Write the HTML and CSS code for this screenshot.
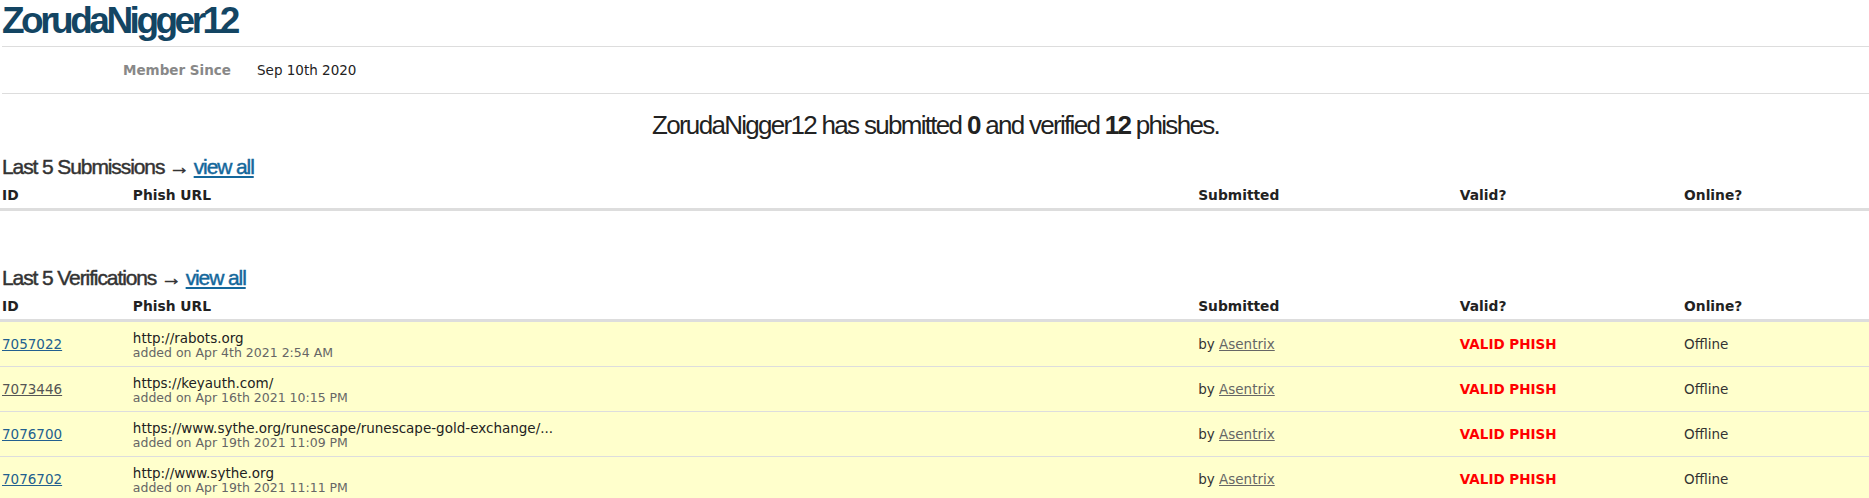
FILE: index.html
```html
<!DOCTYPE html>
<html>
<head>
<meta charset="utf-8">
<title>ZorudaNigger12</title>
<link rel="stylesheet" href="styles.css">
</head>
<body>
<div class="page">
  <h1 class="username">ZorudaNigger12</h1>
  <div class="profile">
    <span class="profile-label">Member Since</span>
    <span class="profile-value">Sep 10th 2020</span>
  </div>
  <p class="summary">ZorudaNigger12 has submitted <b>0</b> and verified <b>12</b> phishes.</p>

  <h2 class="section-title">Last 5 Submissions &rarr; <a href="#" class="view-all">view all</a></h2>
</div>
<table class="data">
  <colgroup><col class="c-id"><col class="c-url"><col class="c-sub"><col class="c-valid"><col class="c-online"></colgroup>
  <thead>
    <tr><th>ID</th><th>Phish URL</th><th>Submitted</th><th>Valid?</th><th>Online?</th></tr>
  </thead>
  <tbody></tbody>
</table>

<div class="page">
  <h2 class="section-title second">Last 5 Verifications &rarr; <a href="#" class="view-all">view all</a></h2>
</div>
<table class="data">
  <colgroup><col class="c-id"><col class="c-url"><col class="c-sub"><col class="c-valid"><col class="c-online"></colgroup>
  <thead>
    <tr><th>ID</th><th>Phish URL</th><th>Submitted</th><th>Valid?</th><th>Online?</th></tr>
  </thead>
  <tbody>
    <tr>
      <td><a href="#" class="id-link">7057022</a></td>
      <td class="url-cell"><div class="url">http://rabots.org</div><div class="added">added on Apr 4th 2021 2:54 AM</div></td>
      <td>by <a href="#" class="user-link">Asentrix</a></td>
      <td class="valid">VALID PHISH</td>
      <td>Offline</td>
    </tr>
    <tr>
      <td><a href="#" class="id-link visited">7073446</a></td>
      <td class="url-cell"><div class="url">https://keyauth.com/</div><div class="added">added on Apr 16th 2021 10:15 PM</div></td>
      <td>by <a href="#" class="user-link">Asentrix</a></td>
      <td class="valid">VALID PHISH</td>
      <td>Offline</td>
    </tr>
    <tr>
      <td><a href="#" class="id-link">7076700</a></td>
      <td class="url-cell"><div class="url">https://www.sythe.org/runescape/runescape-gold-exchange/...</div><div class="added">added on Apr 19th 2021 11:09 PM</div></td>
      <td>by <a href="#" class="user-link">Asentrix</a></td>
      <td class="valid">VALID PHISH</td>
      <td>Offline</td>
    </tr>
    <tr>
      <td><a href="#" class="id-link">7076702</a></td>
      <td class="url-cell"><div class="url">http://www.sythe.org</div><div class="added">added on Apr 19th 2021 11:11 PM</div></td>
      <td>by <a href="#" class="user-link">Asentrix</a></td>
      <td class="valid">VALID PHISH</td>
      <td>Offline</td>
    </tr>
  </tbody>
</table>
</body>
</html>
```

FILE: styles.css
```css
html, body {
  margin: 0;
  padding: 0;
  background: #ffffff;
}
body {
  font-family: "DejaVu Sans", Verdana, sans-serif;
  font-size: 13.5px;
  color: #333333;
  overflow: hidden;
}
.page {
  padding-left: 2px;
}
.username {
  margin: 0 0 4px 0;
  font-family: "Liberation Sans", Arial, sans-serif;
  font-weight: bold;
  font-size: 37px;
  line-height: 42px;
  letter-spacing: -3.5px;
  color: #134563;
}
.profile {
  display: grid;
  grid-template-columns: 229px auto;
  column-gap: 26px;
  justify-content: start;
  border-top: 1px solid #dddddd;
  border-bottom: 1px solid #dddddd;
  padding: 15px 0;
  line-height: 16px;
}
.profile-label {
  text-align: right;
  font-weight: bold;
  color: #888888;
}
.profile-value {
  color: #222222;
}
.summary {
  margin: 16px 0 0 0;
  text-align: center;
  font-family: "Liberation Sans", Arial, sans-serif;
  font-size: 26px;
  line-height: 30px;
  letter-spacing: -1.7px;
  color: #222222;
}
.summary b {
  font-weight: bold;
}
.section-title {
  margin: 15px 0 0 0;
  font-family: "Liberation Sans", Arial, sans-serif;
  font-weight: normal;
  font-size: 21px;
  line-height: 24px;
  letter-spacing: -1.1px;
  color: #333333;
  -webkit-text-stroke: 0.45px #333333;
}
.section-title.second {
  margin-top: 55px;
}
.view-all {
  color: #14679b;
  -webkit-text-stroke: 0.45px #14679b;
  text-decoration: underline;
  text-decoration-thickness: 2px;
  text-underline-offset: 2px;
}
.data {
  width: 100%;
  table-layout: fixed;
  border-collapse: collapse;
}
.c-id { width: 7%; }
.c-url { width: 57%; }
.c-sub { width: 14%; }
.c-valid { width: 12%; }
.c-online { width: 10%; }
.data th {
  text-align: left;
  font-weight: bold;
  font-size: 13.8px;
  color: #222222;
  padding: 8px 2px 5px 2px;
  line-height: 16px;
  border-bottom: 3px solid #dddddd;
}
.data td {
  background: #ffffcc;
  padding: 0 2px;
  height: 44px;
  vertical-align: middle;
  border-bottom: 1px solid #dddddd;
  line-height: 16px;
  color: #333333;
  white-space: nowrap;
  overflow: hidden;
}
.data td.url-cell {
  padding-top: 3px;
  box-sizing: border-box;
}
.url {
  line-height: 15px;
  color: #222222;
}
.added {
  font-size: 12.5px;
  line-height: 14px;
  color: #666666;
}
.id-link {
  color: #22608f;
  text-decoration: underline;
}
.id-link.visited {
  color: #555555;
}
.user-link {
  color: #666666;
  text-decoration: underline;
}
.valid {
  color: #ff0000 !important;
  font-weight: bold;
}
```
